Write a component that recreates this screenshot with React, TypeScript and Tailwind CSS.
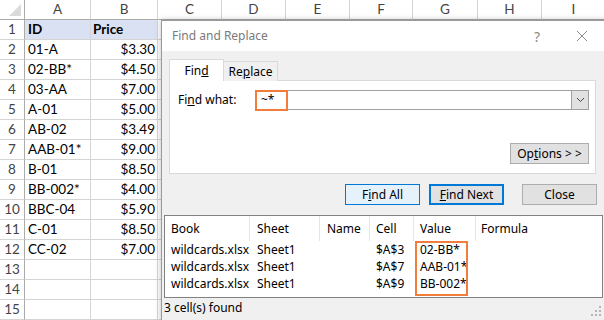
import React from 'react'

const colNames = ['A', 'B', 'C', 'D', 'E', 'F', 'G', 'H', 'I']
const colWidths = ['w-[66px]', 'w-[67px]', 'w-[64px]', 'w-[64px]', 'w-[64px]', 'w-[63px]', 'w-[65px]', 'w-[64px]', 'w-[64px]']

const data: [string, string][] = [
  ['ID', 'Price'],
  ['01-A', '$3.30'],
  ['02-BB*', '$4.50'],
  ['03-AA', '$7.00'],
  ['A-01', '$5.00'],
  ['AB-02', '$3.49'],
  ['AAB-01*', '$9.00'],
  ['B-01', '$8.50'],
  ['BB-002*', '$4.00'],
  ['BBC-04', '$5.90'],
  ['C-01', '$8.50'],
  ['CC-02', '$7.00'],
  ['', ''],
  ['', ''],
  ['', ''],
]

const results = [
  ['wildcards.xlsx', 'Sheet1', '', '$A$3', '02-BB*'],
  ['wildcards.xlsx', 'Sheet1', '', '$A$7', 'AAB-01*'],
  ['wildcards.xlsx', 'Sheet1', '', '$A$9', 'BB-002*'],
]

const cellFont = { fontFamily: 'Lato, "Liberation Sans", sans-serif' }
const uiFont = { fontFamily: '"Noto Sans", "Open Sans", sans-serif' }

function Sheet() {
  return (
    <div className="flex flex-col text-[13.5px] text-black" style={cellFont}>
      {/* column headers */}
      <div className="flex h-[20px]">
        <div className="relative w-[25px] shrink-0 border-r border-b border-[#ababab] bg-white">
          <svg className="absolute right-[3px] bottom-[3px]" width="12" height="12" viewBox="0 0 12 12">
            <polygon points="12,0 12,12 0,12" fill="#dadada" />
          </svg>
        </div>
        {colNames.map((c, i) => (
          <div
            key={c}
            className={`${colWidths[i]} shrink-0 flex items-center justify-center border-r border-b border-[#d4d4d4] border-b-[#ababab] bg-white text-[#444]`}
          >
            {c}
          </div>
        ))}
      </div>
      {data.map((row, r) => (
        <div key={r} className="flex h-[20px]">
          <div className="w-[25px] shrink-0 flex items-center justify-center border-r border-b border-[#d4d4d4] border-r-[#ababab] bg-white text-[#444]">
            {r + 1}
          </div>
          <div
            className={`w-[66px] shrink-0 flex items-center pl-[3px] border-r border-b border-[#d4d4d4] ${r === 0 ? 'bg-[#d9e1f2] font-bold' : ''}`}
          >
            {row[0]}
          </div>
          <div
            className={`w-[67px] shrink-0 flex items-center border-r border-b border-[#d4d4d4] ${r === 0 ? 'bg-[#d9e1f2] font-bold justify-start pl-[2px]' : 'justify-end pr-[2px]'}`}
          >
            {row[1]}
          </div>
          {colWidths.slice(2).map((w, i) => (
            <div key={i} className={`${w} shrink-0 border-r border-b border-[#d4d4d4]`} />
          ))}
        </div>
      ))}
    </div>
  )
}

function Btn({ children, variant = 'plain', className = '' }: { children: React.ReactNode; variant?: 'plain' | 'hover' | 'default'; className?: string }) {
  const look =
    variant === 'hover'
      ? 'border border-[#0078d7] bg-[#e5f1fb]'
      : variant === 'default'
        ? 'border-2 border-[#0078d7] bg-[#e1e1e1]'
        : 'border border-[#adadad] bg-[#e1e1e1]'
  return (
    <div className={`h-[21px] flex items-center justify-center text-[12px] text-black ${look} ${className}`}>
      {children}
    </div>
  )
}

function Dialog() {
  return (
    <div
      className="absolute left-[161px] top-[20px] w-[446px] h-[302px] flex flex-col border-l border-t border-[#9a9a9a] bg-[#f0f0f0] shadow-[0_0_6px_rgba(0,0,0,0.25)] text-[12px] text-black"
      style={uiFont}
    >
      {/* title bar */}
      <div className="h-[30px] shrink-0 flex items-center bg-white">
        <span className="pl-[10px] text-[12px] text-[#7a7a7a]">Find and Replace</span>
        <span className="ml-auto text-[14px] text-[#8a8a8a]">?</span>
        <svg className="ml-[36px] mr-[19px]" width="12" height="12" viewBox="0 0 12 12">
          <path d="M1 1 L11 11 M11 1 L1 11" stroke="#8a8a8a" strokeWidth="1" fill="none" />
        </svg>
      </div>

      {/* tabs */}
      <div className="mt-[8px] ml-[7px] flex items-end -mb-px relative z-10">
        <div className="w-[55px] h-[22px] flex items-center justify-center border border-b-0 border-[#d9d9d9] bg-white">
          <span>
            Fin<span className="underline">d</span>
          </span>
        </div>
        <div className="w-[54px] h-[20px] flex items-center justify-center border border-l-0 border-b-0 border-[#d9d9d9] bg-[#f0f0f0]">
          <span>
            Re<span className="underline">p</span>lace
          </span>
        </div>
      </div>

      {/* tab panel */}
      <div className="ml-[7px] w-[427px] h-[94px] shrink-0 flex flex-col border border-[#d9d9d9] bg-white">
        <div className="mt-[9px] flex items-center">
          <span className="pl-[8px] w-[85px]">
            Fi<span className="underline">n</span>d what:
          </span>
          <div className="relative w-[334px] h-[20px] flex items-center border border-[#a0a0a0] bg-white">
            <span className="pl-[5px] text-[12px]">~*</span>
            <div className="absolute right-0 top-0 h-full w-[17px] flex items-center justify-center border-l border-[#a0a0a0] bg-[#e1e1e1]">
              <svg width="9" height="6" viewBox="0 0 9 6">
                <path d="M1 1 L4.5 4.5 L8 1" stroke="#444" strokeWidth="1" fill="none" />
              </svg>
            </div>
            <div className="absolute -left-px -top-px w-[33px] h-[21px] border-2 border-[#f07d3b]" />
          </div>
        </div>
        <div className="mt-auto mb-[9px] flex justify-end pr-[6px]">
          <Btn className="w-[79px]">
            Op<span className="underline">t</span>ions &gt; &gt;
          </Btn>
        </div>
      </div>

      {/* action buttons */}
      <div className="mt-[10px] flex">
        <Btn variant="hover" className="ml-[183px] w-[75px]">
          F<span className="underline">i</span>nd All
        </Btn>
        <Btn variant="default" className="ml-[9px] w-[75px]">
          <span className="underline">F</span>ind Next
        </Btn>
        <Btn className="ml-[18px] w-[75px]">Close</Btn>
      </div>

      {/* results list */}
      <div className="relative mt-[10px] ml-[2px] w-[439px] h-[83px] shrink-0 flex flex-col border border-[#828282] bg-white">
        <div className="flex h-[25px] shrink-0 items-center">
          <div className="w-[85px] h-full flex items-center pl-[6px] border-r border-[#e5e5e5]">Book</div>
          <div className="w-[70px] h-full flex items-center pl-[7px] border-r border-[#e5e5e5]">Sheet</div>
          <div className="w-[50px] h-full flex items-center pl-[7px] border-r border-[#e5e5e5]">Name</div>
          <div className="w-[44px] h-full flex items-center pl-[6px] border-r border-[#e5e5e5]">Cell</div>
          <div className="w-[62px] h-full flex items-center pl-[6px] border-r border-[#e5e5e5]">Value</div>
          <div className="flex-1 h-full flex items-center pl-[5px]">Formula</div>
        </div>
        {results.map((r, i) => (
          <div key={i} className="flex h-[17px] items-center">
            <div className="w-[85px] pl-[6px]">{r[0]}</div>
            <div className="w-[70px] pl-[7px]">{r[1]}</div>
            <div className="w-[50px] pl-[7px]">{r[2]}</div>
            <div className="w-[44px] pl-[6px]">{r[3]}</div>
            <div className="w-[62px] pl-[6px]">{r[4]}</div>
          </div>
        ))}
        <div className="absolute left-[250px] top-[25px] w-[53px] h-[55px] border-2 border-[#f07d3b]" />
      </div>

      {/* status bar */}
      <div className="relative flex-1 flex items-center pl-[2px] pb-[4px]">
        <span>3 cell(s) found</span>
        <svg className="absolute right-[6px] bottom-[6px]" width="10" height="10" viewBox="0 0 10 10">
          <rect x="8" y="0" width="2" height="2" fill="#b4b4b4" />
          <rect x="4" y="4" width="2" height="2" fill="#b4b4b4" />
          <rect x="8" y="4" width="2" height="2" fill="#b4b4b4" />
          <rect x="0" y="8" width="2" height="2" fill="#b4b4b4" />
          <rect x="4" y="8" width="2" height="2" fill="#b4b4b4" />
          <rect x="8" y="8" width="2" height="2" fill="#b4b4b4" />
        </svg>
      </div>
    </div>
  )
}

export default function App() {
  return (
    <div className="relative w-[604px] h-[320px] overflow-hidden bg-white">
      <Sheet />
      <Dialog />
    </div>
  )
}
